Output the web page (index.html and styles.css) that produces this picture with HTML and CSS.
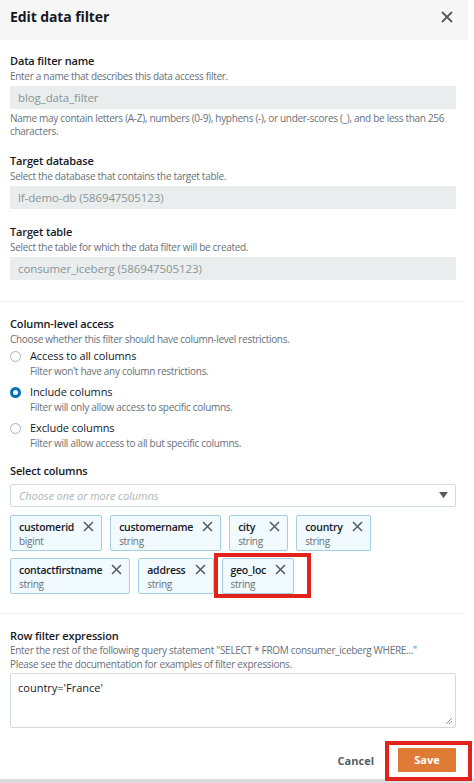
FILE: index.html
```html
<!DOCTYPE html>
<html>
<head>
<meta charset="utf-8">
<link rel="stylesheet" href="styles.css">
</head>
<body>
<div class="modal">
  <div class="header">
    <h1 class="title">Edit data filter</h1>
    <svg class="close" width="12" height="12" viewBox="0 0 12 12"><path d="M1 1L11 11M11 1L1 11" stroke="#545b64" stroke-width="1.8" fill="none"/></svg>
  </div>

  <div class="section first">
    <div class="field">
      <div class="label">Data filter name</div>
      <div class="desc">Enter a name that describes this data access filter.</div>
      <div class="input disabled">blog_data_filter</div>
      <div class="help">Name may contain letters (A-Z), numbers (0-9), hyphens (-), or under-scores (_), and be less than 256 characters.</div>
    </div>
    <div class="field gap">
      <div class="label">Target database</div>
      <div class="desc">Select the database that contains the target table.</div>
      <div class="input disabled">lf-demo-db (586947505123)</div>
    </div>
    <div class="field gap">
      <div class="label">Target table</div>
      <div class="desc">Select the table for which the data filter will be created.</div>
      <div class="input disabled">consumer_iceberg (586947505123)</div>
    </div>
  </div>

  <div class="section second">
    <div class="label">Column-level access</div>
    <div class="desc">Choose whether this filter should have column-level restrictions.</div>
    <div class="radios">
      <div class="radio">
        <span class="dot"></span>
        <div class="rtext">
          <div class="rlabel">Access to all columns</div>
          <div class="desc">Filter won't have any column restrictions.</div>
        </div>
      </div>
      <div class="radio">
        <span class="dot checked"></span>
        <div class="rtext">
          <div class="rlabel">Include columns</div>
          <div class="desc">Filter will only allow access to specific columns.</div>
        </div>
      </div>
      <div class="radio">
        <span class="dot"></span>
        <div class="rtext">
          <div class="rlabel">Exclude columns</div>
          <div class="desc">Filter will allow access to all but specific columns.</div>
        </div>
      </div>
    </div>

    <div class="label select-label">Select columns</div>
    <div class="select">
      <span class="placeholder">Choose one or more columns</span>
      <svg class="caret" width="10" height="8" viewBox="0 0 10 8"><path d="M0 0H10L5 7Z" fill="#545b64"/></svg>
    </div>
    <div class="tokens">
      <div class="token"><div class="tname"><span>customerid</span><svg class="tx" width="11" height="11" viewBox="0 0 11 11"><path d="M1 1L10 10M10 1L1 10" stroke="#545b64" stroke-width="1.5" fill="none"/></svg></div><div class="ttype">bigint</div></div>
      <div class="token"><div class="tname"><span>customername</span><svg class="tx" width="11" height="11" viewBox="0 0 11 11"><path d="M1 1L10 10M10 1L1 10" stroke="#545b64" stroke-width="1.5" fill="none"/></svg></div><div class="ttype">string</div></div>
      <div class="token short"><div class="tname"><span>city</span><svg class="tx" width="11" height="11" viewBox="0 0 11 11"><path d="M1 1L10 10M10 1L1 10" stroke="#545b64" stroke-width="1.5" fill="none"/></svg></div><div class="ttype">string</div></div>
      <div class="token"><div class="tname"><span>country</span><svg class="tx" width="11" height="11" viewBox="0 0 11 11"><path d="M1 1L10 10M10 1L1 10" stroke="#545b64" stroke-width="1.5" fill="none"/></svg></div><div class="ttype">string</div></div>
      <div class="token"><div class="tname"><span>contactfirstname</span><svg class="tx" width="11" height="11" viewBox="0 0 11 11"><path d="M1 1L10 10M10 1L1 10" stroke="#545b64" stroke-width="1.5" fill="none"/></svg></div><div class="ttype">string</div></div>
      <div class="token"><div class="tname"><span>address</span><svg class="tx" width="11" height="11" viewBox="0 0 11 11"><path d="M1 1L10 10M10 1L1 10" stroke="#545b64" stroke-width="1.5" fill="none"/></svg></div><div class="ttype">string</div></div>
      <div class="token marked"><div class="tname"><span>geo_loc</span><svg class="tx" width="11" height="11" viewBox="0 0 11 11"><path d="M1 1L10 10M10 1L1 10" stroke="#545b64" stroke-width="1.5" fill="none"/></svg></div><div class="ttype">string</div></div>
    </div>
  </div>

  <div class="section third">
    <div class="label">Row filter expression</div>
    <div class="desc two">Enter the rest of the following query statement "SELECT * FROM consumer_iceberg WHERE..."<br>Please see the documentation for examples of filter expressions.</div>
    <div class="textarea">country='France'
      <svg class="grip" width="8" height="8" viewBox="0 0 8 8"><path d="M7 1L1 7M7 4L4 7" stroke="#879596" stroke-width="1" fill="none"/></svg>
    </div>
  </div>

  <div class="footer">
    <span class="cancel">Cancel</span>
    <span class="save">Save</span>
  </div>
  <div class="bottom"></div>
</div>
</body>
</html>
```

FILE: styles.css
```css
* { box-sizing: border-box; }
html, body { margin: 0; padding: 0; background: #ffffff; }
body {
  font-family: "Open Sans", "Noto Sans", sans-serif;
  color: #16191f;
  width: 474px;
  height: 783px;
  overflow: hidden;
}
.modal { width: 474px; height: 783px; display: flex; flex-direction: column; }
.header {
  height: 40px;
  margin-right: 6px;
  background: #f7f7f7;
  display: flex;
  align-items: center;
  justify-content: space-between;
  padding: 0 15px 5px 10px;
}
.title { margin: 0; font-size: 14px; font-weight: 700; line-height: 20px; letter-spacing: -0.1px; }
.close { display: block; }

.section { padding: 0 18px 0 10px; }
.first { padding-top: 13px; height: 262px; border-bottom: 1px solid #eef0f0; margin-right: 10px; padding-right: 8px; }
.second { padding-top: 14px; height: 313px; border-bottom: 1px solid #eef0f0; margin-right: 10px; padding-right: 8px; }
.third { padding-top: 14px; padding-right: 18px; }

.label { font-size: 11px; font-weight: 600; line-height: 16px; letter-spacing: -0.15px; }
.desc, .help { font-size: 10px; line-height: 14px; color: #687078; letter-spacing: -0.3px; }
.help { line-height: 13px; margin-top: 3px; }
.gap { margin-top: 15px; }
.field .desc { margin-bottom: 3px; }
.input {
  height: 23px;
  background: #eaeded;
  border-radius: 1px;
  font-size: 11.5px;
  line-height: 23px;
  padding-left: 8px;
  color: #879596;
  letter-spacing: -0.1px;
}

.radios { margin-top: 2px; display: flex; flex-direction: column; gap: 6px; }
.radio { display: flex; align-items: flex-start; }
.dot {
  width: 11px; height: 11px;
  border-radius: 50%;
  border: 1px solid #aab7b8;
  background: #fff;
  margin-top: 3px;
  margin-right: 9px;
  flex: none;
}
.dot.checked { border: 3.5px solid #0073bb; }
.rlabel { font-size: 11px; font-weight: 500; line-height: 16px; letter-spacing: -0.1px; }

.select-label { margin-top: 13px; }
.select {
  margin-top: 5px;
  height: 23px;
  border: 1px solid #d5dbdb;
  border-radius: 2px;
  display: flex;
  align-items: center;
  justify-content: space-between;
  padding: 0 7px 0 8px;
}
.placeholder { font-size: 11px; font-style: italic; color: #aab7b8; letter-spacing: -0.1px; }
.caret { display: block; width: 9px; height: 7px; }

.tokens { margin-top: 8px; display: flex; flex-wrap: wrap; column-gap: 8px; row-gap: 7px; }
.token {
  position: relative;
  height: 36px;
  background: #f1faff;
  border: 1px solid #a3cfe0;
  border-radius: 2px;
  padding: 3px 7px 0 8px;
}
.token.short { min-width: 59px; }
.tname { display: flex; align-items: center; justify-content: space-between; gap: 9px; font-size: 10.5px; font-weight: 600; line-height: 16px; letter-spacing: -0.25px; }
.tx { display: block; flex: none; }
.ttype { font-size: 10px; line-height: 13px; color: #687078; letter-spacing: -0.3px; }
.marked::after {
  content: "";
  position: absolute;
  left: -9px; right: -18px; top: -6px; bottom: -5px;
  border: 4px solid #e3231b;
}

.two { line-height: 13.5px; }
.textarea {
  position: relative;
  margin-top: 2px;
  height: 55px;
  border: 1px solid #d5dbdb;
  border-radius: 2px;
  font-size: 11px;
  line-height: 16px;
  padding: 6px 7px;
  font-weight: 500;
}
.grip { position: absolute; right: 2px; bottom: 2px; }

.footer {
  margin-top: 20px;
  height: 24px;
  display: flex;
  justify-content: flex-end;
  align-items: center;
  padding-right: 18px;
  gap: 24px;
}
.cancel { font-size: 11px; font-weight: 700; color: #545b64; }
.save {
  position: relative;
  width: 58px; height: 24px;
  background: #e07b35;
  color: #fff;
  font-size: 11px;
  font-weight: 700;
  line-height: 24px;
  text-align: center;
  border-radius: 1px;
}
.save::after {
  content: "";
  position: absolute;
  left: -13px; right: -16px; top: -7px; bottom: -9px;
  border: 4px solid #e3231b;
}
.bottom { margin-top: 7px; height: 4px; background: #dcdcdc; }
```
